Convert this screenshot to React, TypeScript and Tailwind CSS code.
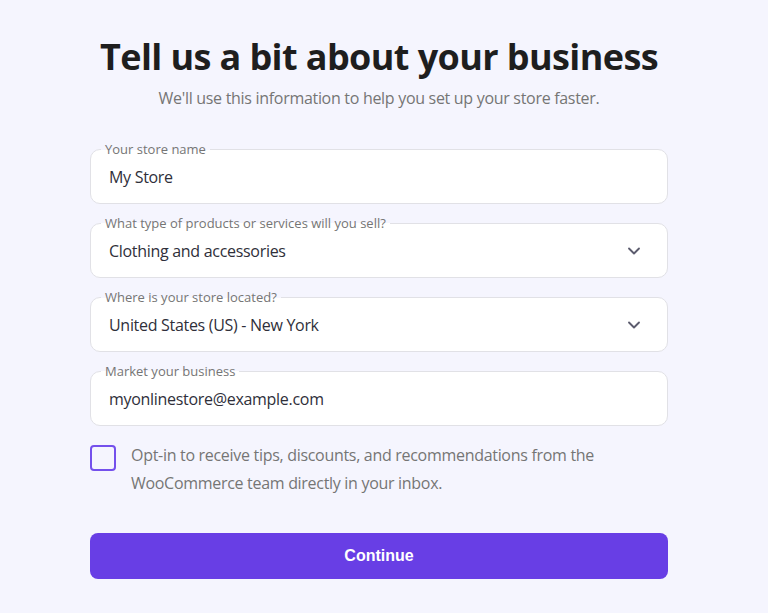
import { ChevronDown } from "lucide-react";

interface IField {
	label: string;
	value: string;
	select?: boolean;
}

const fields: IField[] = [
	{ label: "Your store name", value: "My Store" },
	{ label: "What type of products or services will you sell?", value: "Clothing and accessories", select: true },
	{ label: "Where is your store located?", value: "United States (US) - New York", select: true },
	{ label: "Market your business", value: "myonlinestore@example.com" },
];

const Field = ({ label, value, select }: IField) => (
	<div className="relative flex h-[55px] items-center justify-between rounded-[10px] border border-[#e1e1e6] bg-white pl-[18px] pr-[23px]">
		{/* label sits on the top border, like a legend */}
		<span className="absolute -top-[9px] left-[10px] bg-[linear-gradient(to_bottom,#f5f5fe_50%,#ffffff_50%)] px-[4px] text-[13px] leading-[17px] text-[#757575]">
			{label}
		</span>
		<span className="text-[16px] tracking-[-0.3px] text-[#2f2f3a]">{value}</span>
		{select && <ChevronDown className="h-[20px] w-[20px] text-[#5c5c6e]" strokeWidth={2.25} />}
	</div>
);

const App = () => {
	return (
		<div className="min-h-[613px] w-full bg-[#f5f5fe] pr-[10px] font-['Open_Sans',sans-serif]">
			<div className="mx-auto flex w-[578px] flex-col pt-[34px]">
				<h1 className="text-center text-[36px] font-bold leading-[46px] tracking-[-0.6px] text-[#1e1e1e]">
					Tell us a bit about your business
				</h1>
				<p className="mt-[6px] text-center text-[16px] leading-[24px] tracking-[-0.3px] text-[#757575]">
					We'll use this information to help you set up your store faster.
				</p>
				<div className="mt-[39px] flex flex-col gap-[19px]">
					{fields.map((f) => (
						<Field key={f.label} {...f} />
					))}
				</div>
				<label className="mt-[15px] flex gap-[15px]">
					<span className="mt-[4px] h-[26px] w-[26px] shrink-0 rounded-[4px] border-2 border-[#7450ec]" />
					<span className="text-[16px] leading-[28px] tracking-[-0.3px] text-[#757575]">
						Opt-in to receive tips, discounts, and recommendations from the WooCommerce team directly in your inbox.
					</span>
				</label>
				<button className="mt-[36px] h-[46px] rounded-[8px] bg-[#683ee5] font-['Liberation_Sans',sans-serif] text-[16px] font-bold text-white">
					Continue
				</button>
			</div>
		</div>
	);
};

export default App;
